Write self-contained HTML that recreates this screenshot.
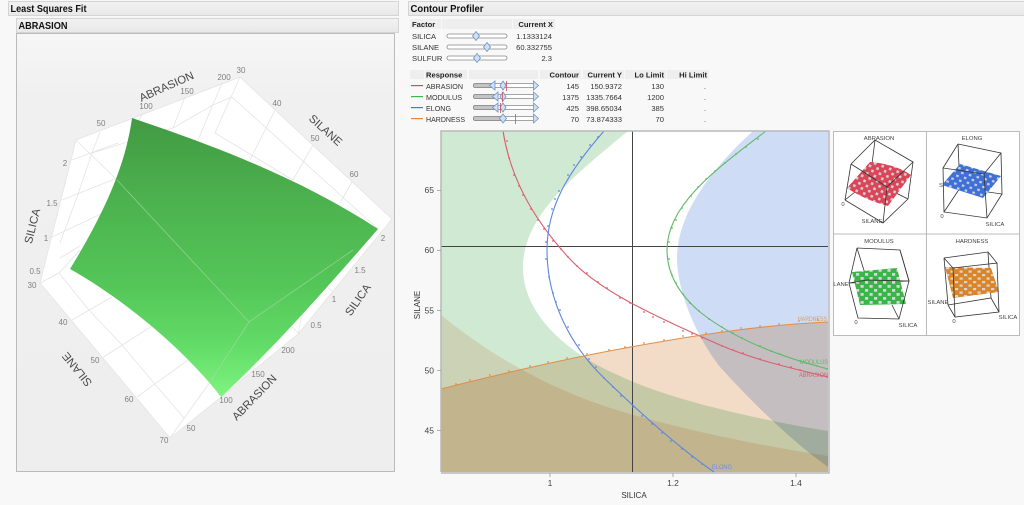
<!DOCTYPE html>
<html>
<head>
<meta charset="utf-8">
<style>
html,body{margin:0;padding:0;background:#f8f8f8;width:1024px;height:505px;overflow:hidden}
svg{display:block}
text{font-family:"Liberation Sans",sans-serif}
.h{font-size:10px;font-weight:bold;fill:#111}
.th{font-size:7.6px;font-weight:bold;fill:#222}
.t{font-size:7.6px;fill:#333}
.r{text-anchor:end}
.tk{font-size:8px;fill:#808080;text-anchor:middle}
.ax{font-size:11.3px;fill:#484848;text-anchor:middle}
.yl{font-size:8.5px;fill:#444;text-anchor:end}
.ml{font-size:5.9px;fill:#444;text-anchor:middle}
.g{stroke:#e4e4e4;stroke-width:.8;fill:none}
.m{mix-blend-mode:multiply}
.cu{fill:none;stroke-width:1.1;stroke-linejoin:round}
.dt{fill:none;stroke-width:1.8;stroke-linecap:round}
.cb{fill:none;stroke:#333;stroke-width:.8}
.sl{fill:#fff;stroke:#888;stroke-width:.8}
.f{fill:#c4c4c4;stroke:#888;stroke-width:.8}
.d{fill:#cfe0f3;stroke:#6c93c4;stroke-width:.8}
</style>
</head>
<body>
<svg width="1024" height="505" viewBox="0 0 1024 505" xmlns="http://www.w3.org/2000/svg">
<defs>
<linearGradient id="sf" x1="0" y1="118" x2="0" y2="397" gradientUnits="userSpaceOnUse">
<stop offset="0" stop-color="#429a43"/><stop offset=".3" stop-color="#4cb24e"/><stop offset=".6" stop-color="#54c658"/><stop offset=".82" stop-color="#63dc68"/><stop offset="1" stop-color="#80f480"/>
</linearGradient>
<linearGradient id="pn" x1="0" y1="33" x2="0" y2="472" gradientUnits="userSpaceOnUse">
<stop offset="0" stop-color="#f6f6f6"/><stop offset=".15" stop-color="#f0f0f0"/><stop offset="1" stop-color="#eeeeee"/>
</linearGradient>
<linearGradient id="hb" x1="0" y1="0" x2="0" y2="1"><stop offset="0" stop-color="#f2f2f2"/><stop offset="1" stop-color="#e8e8e8"/></linearGradient>
<pattern id="p1" width="8" height="8" patternUnits="userSpaceOnUse" patternTransform="rotate(20)"><rect width="8" height="8" fill="#dc4458"/><rect x="1" y="1" width="2.6" height="2.6" fill="#d0d0d0"/><rect x="5" y="5" width="2.6" height="2.6" fill="#d0d0d0"/></pattern>
<pattern id="p2" width="8" height="8" patternUnits="userSpaceOnUse" patternTransform="rotate(15)"><rect width="8" height="8" fill="#3f6fd8"/><rect x="1" y="1" width="2.6" height="2.2" fill="#c8d0dc"/><rect x="5" y="5" width="2.6" height="2.2" fill="#c8d0dc"/></pattern>
<pattern id="p3" width="9" height="8" patternUnits="userSpaceOnUse"><rect width="9" height="8" fill="#3cb448"/><rect x="1" y="1" width="3.2" height="2.8" fill="#d4d4d4"/><rect x="5.500" y="5" width="3.2" height="2.800" fill="#d4d4d4"/></pattern>
<pattern id="p4" width="9" height="7" patternUnits="userSpaceOnUse"><rect width="9" height="7" fill="#dc8428"/><rect x="1" y="1" width="3.2" height="2.2" fill="#d8d4cc"/><rect x="5.500" y="4.500" width="3.2" height="2.200" fill="#d8d4cc"/></pattern>
</defs>

<!-- headers -->
<rect x="8.500" y="1.500" width="390" height="14" fill="url(#hb)" stroke="#d4d4d4"/>
<text x="10.500" y="12" class="h" textLength="76" lengthAdjust="spacingAndGlyphs">Least Squares Fit</text>
<rect x="16.500" y="18.500" width="382" height="14" fill="url(#hb)" stroke="#d4d4d4"/>
<text x="18.500" y="29" class="h" textLength="49" lengthAdjust="spacingAndGlyphs">ABRASION</text>
<rect x="408.500" y="1.500" width="616" height="14" fill="url(#hb)" stroke="#d4d4d4"/>
<text x="410.500" y="12" class="h" textLength="73" lengthAdjust="spacingAndGlyphs">Contour Profiler</text>

<!-- 3D panel -->
<rect x="16.500" y="33.500" width="378" height="438" fill="url(#pn)" stroke="#bbb"/>
<polygon points="76,140 240,77 392,219 298,334 221,397 170,438 40,283" fill="#fff"/>
<g class="g">
<path d="M76,140 240,77 392,219 298,334 221,397 170,438 40,283 76,140Z"/>
<path d="M100,132 92,153 77,197 60,243M143,113 137,123M185,97 173,128M222,83 198,140M240,77 215,133"/>
<path d="M232,97 213,105 173,128 92,153M232,97 378,229M76,140 117,180"/>
<path d="M72,160 118,143M62,200 120,177M50,238 103,213"/>
<path d="M275,110 250,160M313,145 293,180M352,182 340,203"/>
<path d="M215,133 293,180"/>
<path d="M40,283 59,273 80,250M60,258 80,246M59,273 88,309 122,345 154,383 184,418"/>
<path d="M72,320 112,297M102,358 152,326M137,397 188,360M170,438 210,382"/>
<path d="M302,315 298,334M290,325 300,335M253,367 262,380M325,285 333,292"/>
</g>
<path d="M132,118C215,146 300,178 378,229C325,290 272,350 221,397C185,350 125,300 70,269C100,220 125,170 132,118Z" fill="url(#sf)"/>
<path d="M117,180 249,322 353,250M249,322 210,382" fill="none" stroke="#a8d8a8" stroke-width=".8" opacity=".7"/>
<g>
<text class="ax" transform="translate(168,90) rotate(-24)">ABRASION</text>
<text class="ax" transform="translate(323,133) rotate(42)">SILANE</text>
<text class="ax" transform="translate(36,227) rotate(-76)">SILICA</text>
<text class="ax" transform="translate(80,367) rotate(231)">SILANE</text>
<text class="ax" transform="translate(257,400) rotate(-46)">ABRASION</text>
<text class="ax" transform="translate(361,302) rotate(-55)">SILICA</text>
</g>
<g>
<text class="tk" x="241" y="73">30</text><text class="tk" x="224" y="80">200</text><text class="tk" x="187" y="94">150</text><text class="tk" x="146" y="109">100</text><text class="tk" x="101" y="126">50</text>
<text class="tk" x="277" y="106">40</text><text class="tk" x="315" y="141">50</text><text class="tk" x="354" y="177">60</text><text class="tk" x="383" y="241">2</text>
<text class="tk" x="65" y="166">2</text><text class="tk" x="52" y="206">1.5</text><text class="tk" x="46" y="241">1</text><text class="tk" x="35" y="274">0.5</text><text class="tk" x="32" y="288">30</text>
<text class="tk" x="63" y="325">40</text><text class="tk" x="95" y="363">50</text><text class="tk" x="129" y="402">60</text><text class="tk" x="164" y="443">70</text>
<text class="tk" x="226" y="403">100</text><text class="tk" x="191" y="431">50</text><text class="tk" x="258" y="377">150</text><text class="tk" x="288" y="353">200</text>
<text class="tk" x="316" y="328">0.5</text><text class="tk" x="334" y="302">1</text><text class="tk" x="360" y="273">1.5</text>
</g>

<!-- factor table -->
<rect x="410" y="19" width="31" height="10" fill="#eee"/><rect x="442" y="19" width="70" height="10" fill="#eee"/><rect x="513" y="19" width="42" height="10" fill="#eee"/>
<text x="412" y="27" class="th">Factor</text><text x="553" y="27" class="th r">Current X</text>
<text x="412" y="39" class="t">SILICA</text><text x="412" y="50" class="t">SILANE</text><text x="412" y="61" class="t">SULFUR</text>
<text x="552" y="39" class="t r">1.1333124</text><text x="552" y="50" class="t r">60.332755</text><text x="552" y="61" class="t r">2.3</text>
<rect class="sl" x="447" y="34" width="60" height="4" rx="2"/><rect class="sl" x="447" y="45" width="60" height="4" rx="2"/><rect class="sl" x="447" y="56" width="60" height="4" rx="2"/>
<polygon class="d" points="476,31.500 479.500,36 476,40.500 472.500,36"/>
<polygon class="d" points="487,42.500 490.500,47 487,51.500 483.500,47"/>
<polygon class="d" points="477,53.500 480.500,58 477,62.500 473.500,58"/>

<!-- response table -->
<rect x="410" y="70" width="14" height="9" fill="#eee"/><rect x="425" y="70" width="42" height="9" fill="#eee"/><rect x="469" y="70" width="69" height="9" fill="#eee"/><rect x="540" y="70" width="41" height="9" fill="#eee"/><rect x="583" y="70" width="41" height="9" fill="#eee"/><rect x="625" y="70" width="41" height="9" fill="#eee"/><rect x="667" y="70" width="42" height="9" fill="#eee"/>
<text x="426" y="77.500" class="th">Response</text><text x="579" y="77.500" class="th r">Contour</text><text x="622" y="77.500" class="th r">Current Y</text><text x="664" y="77.500" class="th r">Lo Limit</text><text x="707" y="77.500" class="th r">Hi Limit</text>
<rect x="411" y="85" width="12" height="1.200" fill="#d94a5a"/><rect x="411" y="96" width="12" height="1.200" fill="#3fb84a"/><rect x="411" y="107" width="12" height="1.200" fill="#4a74d8"/><rect x="411" y="118" width="12" height="1.200" fill="#e0883a"/>
<text x="426" y="89" class="t" textLength="37" lengthAdjust="spacingAndGlyphs">ABRASION</text><text x="426" y="100" class="t" textLength="36" lengthAdjust="spacingAndGlyphs">MODULUS</text><text x="426" y="111" class="t" textLength="25" lengthAdjust="spacingAndGlyphs">ELONG</text><text x="426" y="122" class="t" textLength="39" lengthAdjust="spacingAndGlyphs">HARDNESS</text>
<text x="579" y="89" class="t r">145</text><text x="622" y="89" class="t r">150.9372</text><text x="664" y="89" class="t r">130</text><text x="706" y="89" class="t r">.</text>
<text x="579" y="100" class="t r">1375</text><text x="622" y="100" class="t r">1335.7664</text><text x="664" y="100" class="t r">1200</text><text x="706" y="100" class="t r">.</text>
<text x="579" y="111" class="t r">425</text><text x="622" y="111" class="t r">398.65034</text><text x="664" y="111" class="t r">385</text><text x="706" y="111" class="t r">.</text>
<text x="579" y="122" class="t r">70</text><text x="622" y="122" class="t r">73.874333</text><text x="664" y="122" class="t r">70</text><text x="706" y="122" class="t r">.</text>
<g>
<rect class="sl" x="473.500" y="83.500" width="61" height="4" rx="2"/><rect class="f" x="473.500" y="83.500" width="18" height="4" rx="1.500"/>
<rect class="sl" x="473.500" y="94.500" width="61" height="4" rx="2"/><rect class="f" x="473.500" y="94.500" width="23" height="4" rx="1.500"/>
<rect class="sl" x="473.500" y="105.500" width="61" height="4" rx="2"/><rect class="f" x="473.500" y="105.500" width="23" height="4" rx="1.500"/>
<rect class="sl" x="473.500" y="116.500" width="61" height="4" rx="2"/><rect class="f" x="473.500" y="116.500" width="29" height="4" rx="1.500"/>
<polygon class="d" points="495,81 495,90 489.500,85.500"/><polygon class="d" points="498,92 498,101 492.500,96.500"/><polygon class="d" points="498,103 498,112 492.500,107.500"/>
<polygon class="d" points="533.500,81 533.500,90 538.500,85.500"/><polygon class="d" points="533.500,92 533.500,101 538.500,96.500"/><polygon class="d" points="533.500,103 533.500,112 538.500,107.500"/><polygon class="d" points="533.500,114 533.500,123 538.500,118.500"/>
<polygon class="d" points="503,81 506,85.500 503,90 500,85.500"/><polygon class="d" points="503,92 506,96.500 503,101 500,96.500"/><polygon class="d" points="503,103 506,107.500 503,112 500,107.500"/><polygon class="d" points="503,114 506.500,118.500 503,123 499.500,118.500"/>
<path d="M506.500,81v10M502.500,92v10M500.500,103v10M515.500,114v10" stroke="#d94a5a" stroke-width=".8"/>
</g>

<!-- contour plot -->
<svg x="441" y="131" width="387" height="341" viewBox="441 131 387 341" style="isolation:isolate">
<rect x="441" y="131" width="387" height="341" fill="#fff"/>
<path class="m" fill="#cfdcf5" d="M753,131C710,170 677,215 677,258C677,290 695,335 720,367C750,400 790,440 828,467V131Z"/>
<path class="m" fill="#d0e9d2" d="M628,131C575,175 523,215 523,268C523,310 560,350 620,376C670,400 760,420 828,431V472H441V131Z"/>
<path class="m" fill="#f2dcc8" d="M441,389C500,374 560,360 620,349C690,336 760,325 828,322V472H441Z"/>
<path class="m" fill="#fbe6dc" d="M441,315C490,355 550,390 620,411C690,432 770,447 828,456V472H441Z"/>
</svg>
<path d="M632.500,131V472M441,246.500H828" stroke="#444" stroke-width="1" fill="none"/>
<path class="cu" stroke="#d9606e" d="M503,131C510,175 530,215 568,257C595,287 640,310 720,345C755,360 790,368 828,377"/>
<path class="cu" stroke="#5fba68" d="M766,131C715,170 667,205 667,250C667,275 680,295 700,312C735,340 785,358 828,369"/>
<path class="cu" stroke="#5f86dc" d="M604,131C570,170 547,205 547,250C547,300 570,345 604,378C635,408 675,445 714,472"/>
<path class="cu" stroke="#dd8f4e" d="M441,389C500,374 560,360 620,349C690,336 760,325 828,322"/>
<path class="dt" stroke="#d9606e" d="M507,141h0M509,158h0M514,175h0M519,186h0M523,195h0M531,209h0M538,220h0M544,229h0M553,241h0M561,249h0M568,257h0M577,266h0M587,273h0M598,282h0M607,288h0M620,298h0M630,303h0M644,312h0M653,317h0M664,322h0M683,331h0M692,334h0M702,338h0M722,346h0M733,350h0M743,353h0M760,359h0M779,364h0M791,367h0M800,370h0M827,377h0"/>
<path class="dt" stroke="#5f86dc" d="M598,137h0M590,145h0M581,157h0M574,165h0M568,175h0M559,191h0M555,199h0M552,209h0M548,226h0M546,242h0M546,259h0M549,277h0M553,293h0M556,302h0M560,310h0M568,327h0M579,345h0M589,359h0M596,367h0M604,378h0M613,387h0M621,396h0M633,407h0M642,416h0M652,424h0M662,433h0M671,441h0M682,449h0M692,457h0M702,464h0"/>
<path class="dt" stroke="#5fba68" d="M758,139h0M746,147h0M736,154h0M725,163h0M715,171h0M706,179h0M698,187h0M691,196h0M682,208h0M676,220h0M672,228h0M669,242h0M669,259h0M672,275h0M676,283h0M683,294h0M690,303h0M699,311h0M709,319h0M722,327h0M733,333h0M742,338h0M760,346h0M771,351h0M780,354h0M800,361h0M817,366h0M827,369h0"/>
<path class="dt" stroke="#dd8f4e" d="M456,384h0M470,380h0M490,375h0M509,371h0M530,366h0M548,362h0M567,358h0M587,354h0M609,350h0M625,347h0M644,343h0M664,340h0M683,336h0M706,333h0M722,331h0M741,328h0M760,326h0M779,324h0M799,321h0M818,320h0"/>
<text x="798" y="321" font-size="6.500" fill="#dd9a62" textLength="29" lengthAdjust="spacingAndGlyphs">HARDNESS</text>
<text x="800" y="364" font-size="6.500" fill="#62b56c" textLength="28" lengthAdjust="spacingAndGlyphs">MODULUS</text>
<text x="799" y="377" font-size="6.500" fill="#d9606e" textLength="29" lengthAdjust="spacingAndGlyphs">ABRASION</text>
<text x="712" y="469" font-size="6.500" fill="#6f8fd8" textLength="20" lengthAdjust="spacingAndGlyphs">ELONG</text>
<path d="M441,472V131H829V473H441" fill="none" stroke="#b8b8b8" stroke-width="1.500"/>
<path d="M550,473v4M673,473v4M796,473v4M437,190.500h4M437,250.500h4M437,310.500h4M437,370.500h4M437,430.500h4" stroke="#999" stroke-width=".8"/>
<text class="yl" x="434" y="193">65</text><text class="yl" x="434" y="253">60</text><text class="yl" x="434" y="313.500">55</text><text class="yl" x="434" y="373.500">50</text><text class="yl" x="434" y="433.500">45</text>
<text x="550" y="486" font-size="8.500" fill="#444" text-anchor="middle">1</text><text x="673" y="486" font-size="8.500" fill="#444" text-anchor="middle">1.2</text><text x="796" y="486" font-size="8.500" fill="#444" text-anchor="middle">1.4</text>
<text x="634" y="498" font-size="8" fill="#333" text-anchor="middle">SILICA</text>
<text transform="translate(420,305) rotate(-90)" font-size="8" fill="#333" text-anchor="middle">SILANE</text>

<!-- mini cubes -->
<rect x="833.500" y="131.500" width="186" height="204" fill="#fff" stroke="#bbb"/>
<path d="M926.500,131.500V335.500M833.500,234H1019.500" stroke="#bbb" fill="none"/>
<text class="ml" x="879" y="140">ABRASION</text><text class="ml" x="972" y="140">ELONG</text><text class="ml" x="879" y="243">MODULUS</text><text class="ml" x="972" y="243">HARDNESS</text>

<path class="cb" d="M845,200 870,180 908,199M870,180 875,140"/>
<path class="cb" d="M845,200 883,223 908,199"/>
<path d="M847,188L870,162Q895,164 911,175L888,206Q865,200 847,188Z" fill="url(#p1)"/>
<path class="cb" d="M851,164 875,140 913,162 887,187 851,164M851,164 845,200M913,162 908,199M887,187 883,223"/>
<text class="ml" x="843" y="206">0</text><text class="ml" x="872" y="223">SILANE</text>

<path class="cb" d="M960,188 944,212 987,218 1002,194 960,188M960,188 958,144"/>
<polygon points="942,185 960,164 1001,176 983,198" fill="url(#p2)"/>
<path class="cb" d="M958,144 1001,153 984,174 943,168 958,144M943,168 944,212M1001,153 1002,194M984,174 987,218"/>
<text class="ml" x="941" y="187">S</text><text class="ml" x="942" y="218">0</text><text class="ml" x="995" y="226">SILICA</text>

<path class="cb" d="M849,283 909,281M857,248 867,280 861,305M900,250 909,281"/>
<polygon points="852,272 897,268 906,304 860,305" fill="url(#p3)"/>
<path class="cb" d="M857,248 900,250 909,281 899,319 858,318 849,283 857,248M867,280 909,281M849,283 867,280M892,305 899,319"/>
<text class="ml" x="841" y="286">LANE</text><text class="ml" x="856" y="324">0</text><text class="ml" x="908" y="327">SILICA</text>

<path class="cb" d="M948,305 991,298 999,312M991,298 988,252M948,305 955,317"/>
<polygon points="945,267 991,268 999,292 953,298" fill="url(#p4)"/>
<path class="cb" d="M944,258 988,252 997,263 953,268 944,258M944,258 948,305M997,263 999,312 955,317 953,268"/>
<text class="ml" x="938" y="304">SILANE</text><text class="ml" x="954" y="323">0</text><text class="ml" x="1008" y="319">SILICA</text>
</svg>
</body>
</html>
